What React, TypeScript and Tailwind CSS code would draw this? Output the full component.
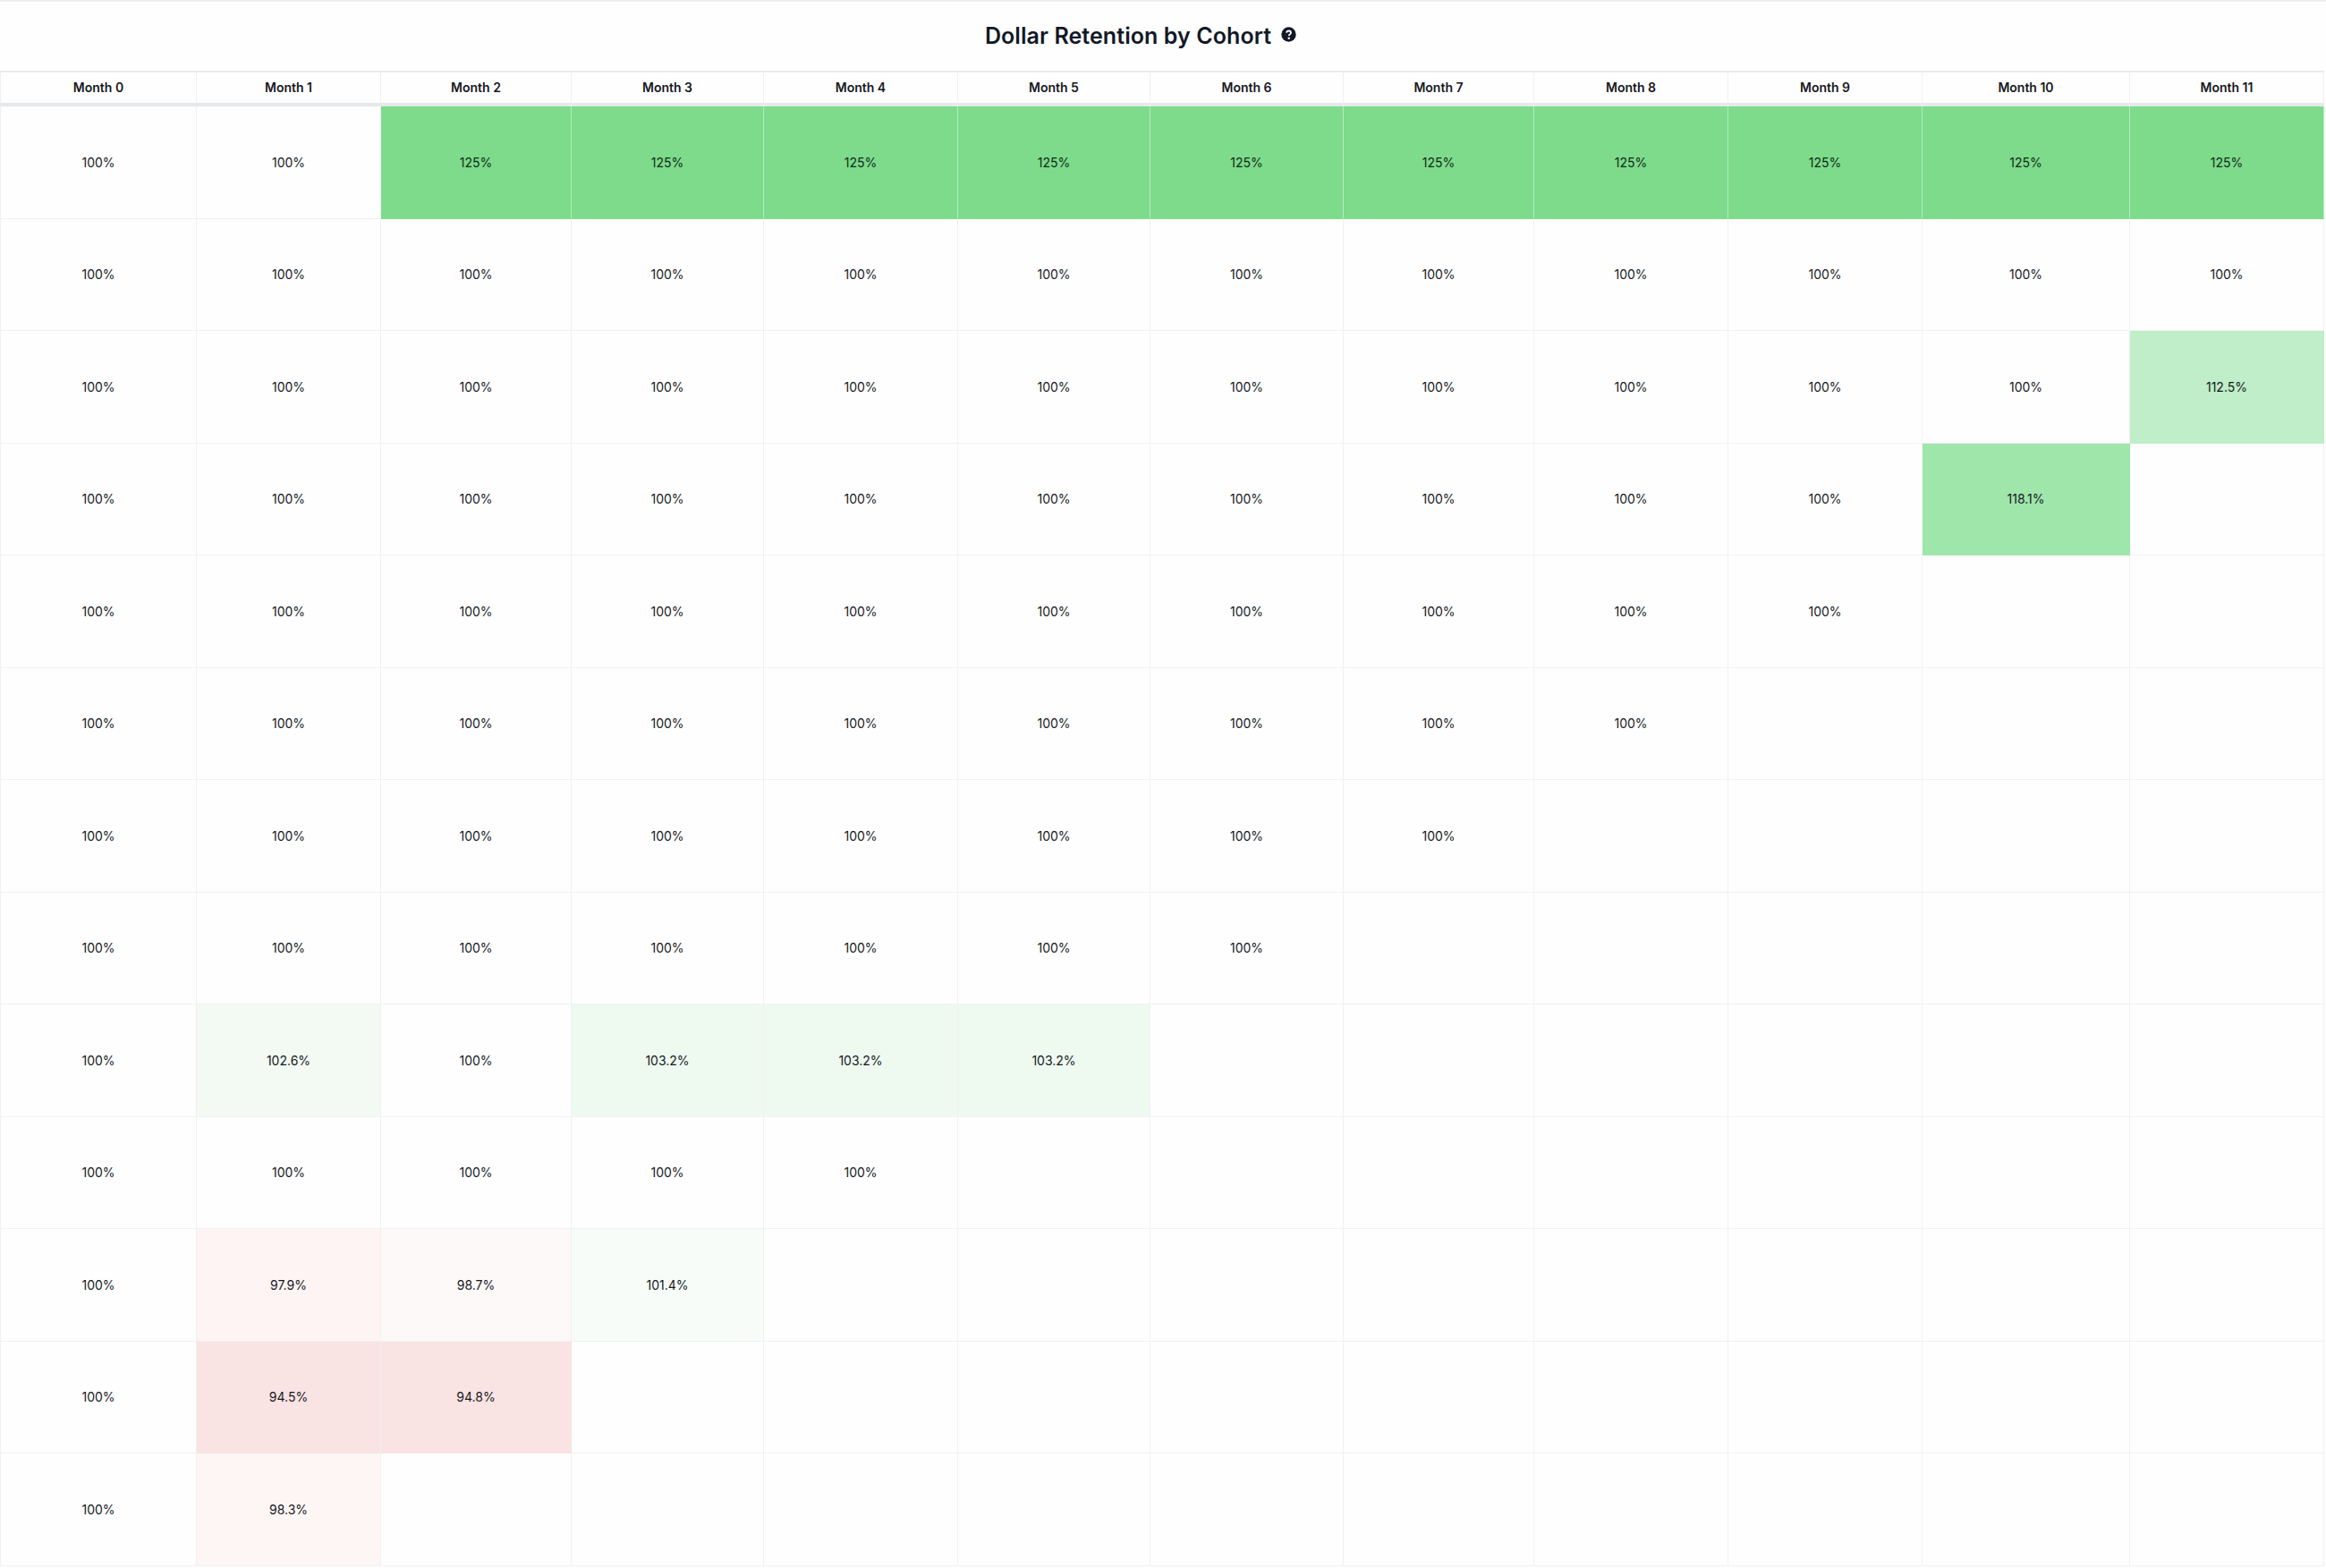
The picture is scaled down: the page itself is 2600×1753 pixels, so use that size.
import React from 'react';

const months = ['Month 0', 'Month 1', 'Month 2', 'Month 3', 'Month 4', 'Month 5', 'Month 6', 'Month 7', 'Month 8', 'Month 9', 'Month 10', 'Month 11'];

const rows: string[][] = [
  ['100%', '100%', '125%', '125%', '125%', '125%', '125%', '125%', '125%', '125%', '125%', '125%'],
  ['100%', '100%', '100%', '100%', '100%', '100%', '100%', '100%', '100%', '100%', '100%', '100%'],
  ['100%', '100%', '100%', '100%', '100%', '100%', '100%', '100%', '100%', '100%', '100%', '112.5%'],
  ['100%', '100%', '100%', '100%', '100%', '100%', '100%', '100%', '100%', '100%', '118.1%'],
  ['100%', '100%', '100%', '100%', '100%', '100%', '100%', '100%', '100%', '100%'],
  ['100%', '100%', '100%', '100%', '100%', '100%', '100%', '100%', '100%'],
  ['100%', '100%', '100%', '100%', '100%', '100%', '100%', '100%'],
  ['100%', '100%', '100%', '100%', '100%', '100%', '100%'],
  ['100%', '102.6%', '100%', '103.2%', '103.2%', '103.2%'],
  ['100%', '100%', '100%', '100%', '100%'],
  ['100%', '97.9%', '98.7%', '101.4%'],
  ['100%', '94.5%', '94.8%'],
  ['100%', '98.3%'],
];

const cellColor = (value?: string) => {
  switch (value) {
    case '125%': return 'bg-[#7ddb8b] border-r-[#b5ecbe] border-b-[#7ddb8b] text-[#0f2a18]';
    case '118.1%': return 'bg-[#9fe6ab] border-r-[#9fe6ab] border-b-[#9fe6ab]';
    case '112.5%': return 'bg-[#bfeec8] border-r-[#bfeec8] border-b-[#bfeec8]';
    case '103.2%': return 'bg-[#eef9f0]';
    case '102.6%': return 'bg-[#f2faf3]';
    case '101.4%': return 'bg-[#f7fcf8]';
    case '98.7%': return 'bg-[#fcf9f8]';
    case '98.3%': return 'bg-[#fdf6f4]';
    case '97.9%': return 'bg-[#fdf4f3]';
    case '94.8%': return 'bg-[#f9e3e3] border-b-[#f9e3e3] border-r-[#f9e3e3]';
    case '94.5%': return 'bg-[#f9e3e3] border-b-[#f9e3e3]';
    default: return 'bg-[#fefefe]';
  }
};

const columns = 'grid grid-cols-[220px_206px_213px_215px_217px_215px_216px_213px_217px_217px_232px_217px]';

export default function App() {
  return (
    <div className="w-[2600px] h-[1753px] overflow-hidden bg-[#fefefe] text-[#16181d] font-['Inter','Liberation_Sans',sans-serif]">
      <div className="h-[79px] border-t-2 border-[#eceef0] flex items-center justify-center pr-[50px]">
        <h1 className="text-[25px] leading-8 font-semibold tracking-[0.08px] text-[#111827] -mt-[1px]">Dollar Retention by Cohort</h1>
        <svg viewBox="0 0 24 24" className="w-[17px] h-[17px] ml-[11px] -mt-[4px]">
          <circle cx="12" cy="12" r="11.5" fill="#111827" />
          <path d="M8.6 9.3c.2-1.9 1.6-3 3.5-3 2 0 3.4 1.2 3.4 2.9 0 1.3-.7 2.1-1.8 2.8-1 .6-1.3 1-1.3 2" fill="none" stroke="#fff" strokeWidth="2.6" />
          <circle cx="12.3" cy="18" r="1.7" fill="#fff" />
        </svg>
      </div>
      <div className={columns}>
        {months.map((m, i) => (
          <div key={m} className={`h-[40px] pb-[1px] flex items-center justify-center border-t-2 border-b-4 border-r border-r-[#eff0f2] border-t-[#e9ebee] border-b-[#e6e8eb] text-[14px] font-semibold ${i === 0 ? 'border-l border-l-[#eff0f2]' : ''}`}>
            {m}
          </div>
        ))}
      </div>
      <div className={`${columns} auto-rows-[125.5px]`}>
        {rows.map((row, r) =>
          months.map((_, c) => (
            <div
              key={`${r}-${c}`}
              className={`flex items-center justify-center border-b border-r border-[#f0f1f3] text-[14px] ${c === 0 ? 'border-l' : ''} ${cellColor(row[c])}`}
            >
              {row[c]}
            </div>
          )),
        )}
      </div>
    </div>
  );
}
